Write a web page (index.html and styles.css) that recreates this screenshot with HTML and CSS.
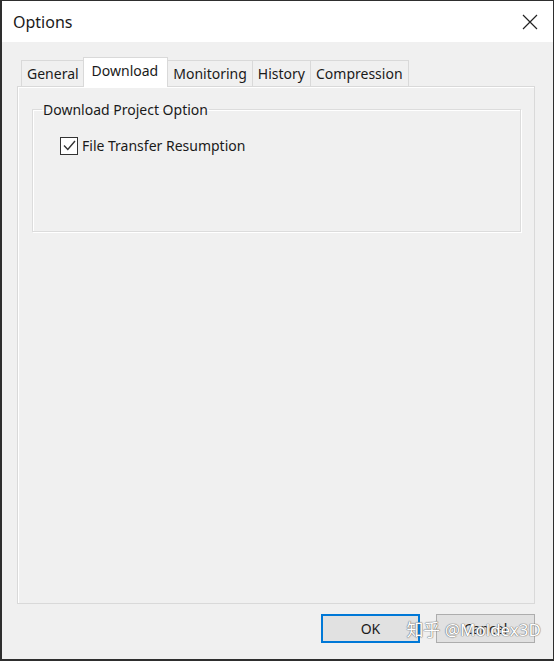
FILE: index.html
```html
<!DOCTYPE html>
<html lang="en">
	<head>
		<meta charset="UTF-8" />
		<title>Options</title>
		<link rel="stylesheet" href="styles.css">
	</head>
	<body>
		<div class="window">
			<div class="titlebar">
				<span class="title">Options</span>
				<svg class="close" width="16" height="16" viewBox="0 0 16 16">
					<path d="M1 1 L15 15 M15 1 L1 15" stroke="#222" stroke-width="1.2" fill="none" />
				</svg>
			</div>
			<div class="content">
				<div class="tabs">
					<div class="tab">General</div>
					<div class="tab active">Download</div>
					<div class="tab">Monitoring</div>
					<div class="tab">History</div>
					<div class="tab">Compression</div>
				</div>
				<div class="panel">
					<fieldset class="group">
						<legend>Download Project Option</legend>
						<label class="check">
							<span class="box">
								<svg width="13" height="11" viewBox="0 0 13 11">
									<path d="M1 5.5 L4.8 9.5 L12 1" stroke="#333" stroke-width="1.4" fill="none" />
								</svg>
							</span>
							File Transfer Resumption
						</label>
					</fieldset>
				</div>
				<div class="buttons">
					<button class="btn default">OK</button>
					<button class="btn">Cancel</button>
				</div>
			</div>
			<div class="watermark">知乎 @Moldex3D</div>
		</div>
	</body>
</html>
```

FILE: styles.css
```css
body {
	margin: 0;
	font-family: "Noto Sans", "Open Sans", "Noto Sans CJK SC", sans-serif;
	color: #1a1a1a;
	background: #f0f0f0;
}
.window {
	position: relative;
	width: 554px;
	height: 661px;
	box-sizing: border-box;
	border: 1px solid #2e2e2e;
	border-left-width: 2px;
	border-bottom-width: 2px;
	display: flex;
	flex-direction: column;
	background: #f0f0f0;
}
.titlebar {
	height: 41px;
	background: #fff;
	display: flex;
	align-items: center;
	justify-content: space-between;
	padding: 0 15px 0 11px;
}
.title {
	font-size: 16px;
}
.content {
	flex: 1;
	padding: 15px 18px 0 15px;
	display: flex;
	flex-direction: column;
}
.tabs {
	display: flex;
	align-items: flex-end;
	padding-left: 4px;
	height: 29px;
}
.tab {
	font-size: 14px;
	height: 26px;
	line-height: 25px;
	box-sizing: border-box;
	padding: 0 5px;
	border: 1px solid #d9d9d9;
	border-bottom: none;
	margin-right: -1px;
	background: #f0f0f0;
}
.tab.active {
	height: 30px;
	background: #fff;
	margin: 0 -1px -1px -1px;
	padding: 0 9px 0 8px;
	position: relative;
	z-index: 1;
}
.panel {
	height: 518px;
	box-sizing: border-box;
	border: 1px solid #d9d9d9;
	box-shadow: inset 1px 1px 0 #fff;
	background: #f0f0f0;
	padding: 13px 13px 0 14px;
}
.group {
	margin: 0;
	height: 132px;
	box-sizing: border-box;
	border: 1px solid #dcdcdc;
	box-shadow: inset 1px 1px 0 #fff, 1px 1px 0 #fff;
	padding: 17px 0 0 27px;
}
.group legend {
	font-size: 14px;
	padding: 0 1px;
	margin-left: -18px;
}
.check {
	display: flex;
	align-items: center;
	gap: 4px;
	font-size: 14px;
}
.box {
	width: 16px;
	height: 16px;
	border: 1px solid #333;
	background: #fff;
	display: flex;
	align-items: center;
	justify-content: center;
}
.buttons {
	display: flex;
	justify-content: flex-end;
	gap: 16px;
	margin-top: 10px;
}
.btn {
	width: 99px;
	height: 29px;
	font-family: inherit;
	font-size: 14px;
	color: #1a1a1a;
	background: #e1e1e1;
	border: 1px solid #adadad;
}
.btn.default {
	border: 2px solid #0078d7;
}
.watermark {
	position: absolute;
	right: 12px;
	bottom: 18px;
	font-size: 17px;
	color: #fff;
	text-shadow: 0 0 1px #777, 0 0 1px #777, 0 0 1px #777;
}
```
